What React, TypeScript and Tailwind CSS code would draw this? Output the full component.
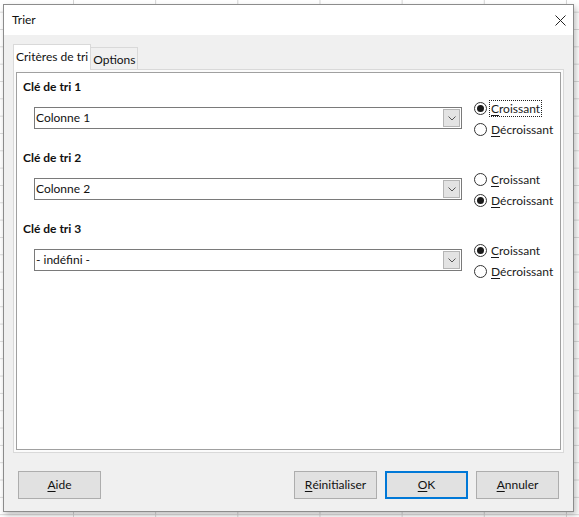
import React from "react";

const font = "font-['Lato','Noto_Sans','DejaVu_Sans',sans-serif]";

function U({ children }: { children: React.ReactNode }) {
  return <span className="underline underline-offset-2 decoration-1">{children}</span>;
}

function Radio({ checked, focus, first, rest }: { checked: boolean; focus?: boolean; first: string; rest: string }) {
  return (
    <div className="flex items-center h-[21px]">
      <div className="w-[13px] h-[13px] rounded-full border border-[#333333] bg-white flex items-center justify-center">
        {checked && <div className="w-[7px] h-[7px] rounded-full bg-[#1a1a1a]" />}
      </div>
      <span
        className={
          "ml-[3px] px-[1px] leading-[15px] text-[12px] text-[#1a1a1a] " +
          (focus ? "outline outline-1 outline-dotted outline-[#222]" : "")
        }
      >
        <U>{first}</U>
        {rest}
      </span>
    </div>
  );
}

function Section({ n, value, asc }: { n: number; value: string; asc: boolean; }) {
  return (
    <div className="flex flex-col">
      <div className="h-[16px] leading-[16px] text-[12px] font-bold text-[#111] pl-[6px]">Clé de tri {n}</div>
      <div className="flex mt-[3px]">
        <div className="ml-[17px] mt-[9px] w-[428px] h-[22px] border border-[#7a7a7a] bg-white flex items-stretch">
          <div className="flex-1 pl-[1px] text-[12px] leading-[20px] text-[#111]">{value}</div>
          <div className="w-[17px] my-[1px] mr-[1px] bg-[#e3e3e3] border border-[#b5b5b5] flex items-center justify-center">
            <svg width="8" height="5" viewBox="0 0 8 5" className="block">
              <path d="M0.5 0.5 L4 4 L7.5 0.5" fill="none" stroke="#555" strokeWidth="1" />
            </svg>
          </div>
        </div>
        <div className="ml-[12px] flex flex-col">
          <Radio checked={asc} focus={n === 1} first="C" rest="roissant" />
          <Radio checked={!asc} first="D" rest="écroissant" />
        </div>
      </div>
    </div>
  );
}

function Btn({ children, primary }: { children: React.ReactNode; primary?: boolean }) {
  return (
    <div
      className={
        "w-[83px] h-[28px] flex items-center justify-center text-[12px] text-[#111] bg-[#e1e1e1] " +
        (primary ? "border-2 border-[#0078d7]" : "border border-[#adadad]")
      }
    >
      {children}
    </div>
  );
}

export default function App() {
  return (
    <div
      className={
        "relative w-[579px] h-[517px] overflow-hidden bg-white " +
        font +
        " bg-[linear-gradient(to_right,#d4d4d4_1px,transparent_1px),linear-gradient(to_bottom,#dadada_1px,transparent_1px)] bg-[size:82.17px_17.33px] bg-[position:73px_11.7px]"
      }
    >
      <div className="absolute left-[3px] top-[4px] w-[571px] h-[508px] border border-[#8c8c8c] bg-[#f0f0f0] flex flex-col shadow-[2px_3px_6px_rgba(0,0,0,0.25)]">
        {/* title bar */}
        <div className="h-[30px] bg-white flex items-center justify-between shrink-0">
          <div className="pl-[8px] text-[12px] text-[#111]">Trier</div>
          <div className="w-[46px] h-[30px] flex items-center justify-center mr-[-10px]">
            <svg width="11" height="11" viewBox="0 0 11 11">
              <path d="M0.5 0.5 L10.5 10.5 M10.5 0.5 L0.5 10.5" stroke="#222" strokeWidth="1" />
            </svg>
          </div>
        </div>
        {/* tabs */}
        <div className="flex items-end pl-[9px] mt-[9px] h-[25px] shrink-0">
          <div className="h-[26px] mb-[-1px] px-[2px] bg-white border border-b-0 border-[#d9d9d9] text-[12px] leading-[24px] text-[#111] relative z-10">
            Critères de tri
          </div>
          <div className="h-[22px] px-[2px] bg-[#f0f0f0] border border-l-0 border-b-0 border-[#d9d9d9] text-[12px] leading-[24px] text-[#111]">
            Options
          </div>
        </div>
        {/* panel */}
        <div className="mx-[9px] h-[384px] border border-[#d9d9d9] bg-[#fbfbfb] p-[2px] shrink-0">
          <div className="h-full border border-[#a0a0a0] bg-white pt-[6px] flex flex-col gap-[10px]">
            <Section n={1} value="Colonne 1" asc={true} />
            <Section n={2} value="Colonne 2" asc={false} />
            <Section n={3} value="- indéfini -" asc={true} />
          </div>
        </div>
        {/* buttons */}
        <div className="flex items-center mt-[18px] px-[14px]">
          <Btn>
            <U>A</U>ide
          </Btn>
          <div className="flex-1" />
          <div className="flex gap-[8px]">
            <Btn>
              <U>R</U>éinitialiser
            </Btn>
            <Btn primary>
              <U>O</U>K
            </Btn>
            <Btn>
              <U>A</U>nnuler
            </Btn>
          </div>
        </div>
      </div>
    </div>
  );
}
